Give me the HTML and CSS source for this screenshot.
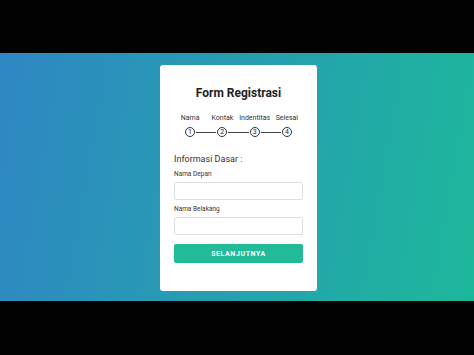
FILE: index.html
```html
<!DOCTYPE html>
<html lang="id">
<head>
<meta charset="utf-8">
<title>Form Registrasi</title>
<link rel="stylesheet" href="styles.css">
</head>
<body>
<div class="screen">
  <div class="bar"></div>
  <div class="stage">
    <form class="card">
      <h1 class="title">Form Registrasi</h1>
      <div class="step-labels">
        <span>Nama</span>
        <span>Kontak</span>
        <span>Indentitas</span>
        <span>Selesai</span>
      </div>
      <div class="step-track">
        <span class="dot">1</span>
        <span class="line"></span>
        <span class="dot">2</span>
        <span class="line"></span>
        <span class="dot">3</span>
        <span class="line"></span>
        <span class="dot">4</span>
      </div>
      <h2 class="section">Informasi Dasar :</h2>
      <label class="field-label">Nama Depan</label>
      <input class="field" type="text">
      <label class="field-label second">Nama Belakang</label>
      <input class="field" type="text">
      <button class="next" type="button">SELANJUTNYA</button>
    </form>
  </div>
  <div class="bar bottom"></div>
</div>
</body>
</html>
```
FILE: styles.css
```css
html, body {
  margin: 0;
  padding: 0;
  background: #000;
}
body {
  font-family: Roboto, "Noto Sans", Arial, sans-serif;
  width: 474px;
  height: 355px;
  overflow: hidden;
}
.screen {
  display: flex;
  flex-direction: column;
  height: 355px;
}
.bar {
  height: 53px;
  background: #020202;
}
.bar.bottom {
  flex: 1;
}
.stage {
  height: 248px;
  padding-top: 12px;
  box-sizing: border-box;
  background: linear-gradient(100deg, #2f87c3 0%, #259fb0 50%, #1db89b 100%);
}
.card {
  width: 157px;
  height: 226px;
  margin: 0 0 0 160px;
  padding: 0 14px;
  box-sizing: border-box;
  background: #fff;
  border-radius: 3px;
  display: flex;
  flex-direction: column;
}
.title {
  margin: 21px 0 0;
  font-size: 12px;
  line-height: 14px;
  font-weight: 700;
  color: #222;
  text-align: center;
}
.step-labels {
  margin-top: 14px;
  display: grid;
  grid-template-columns: repeat(4, 1fr);
  font-size: 7px;
  line-height: 9px;
  color: #333;
  text-align: center;
  white-space: nowrap;
}
.step-track {
  margin-top: 4px;
  display: flex;
  align-items: center;
  padding: 0 11px;
}
.dot {
  width: 10px;
  height: 10px;
  box-sizing: border-box;
  border: 1px solid #333;
  border-radius: 50%;
  font-size: 7px;
  line-height: 8px;
  text-align: center;
  color: #222;
  flex: none;
}
.line {
  flex: 1;
  height: 1px;
  background: #444;
  margin: 0 1px;
}
.section {
  margin: 17px 0 0;
  font-size: 9px;
  line-height: 11px;
  font-weight: 400;
  color: #333;
}
.field-label {
  margin-top: 5px;
  font-size: 6.5px;
  line-height: 8px;
  color: #333;
}
.field-label.second {
  margin-top: 5px;
}
.field {
  margin: 4px 0 0;
  height: 18px;
  box-sizing: border-box;
  border: 1px solid #e0e0e0;
  border-radius: 2px;
  background: #fff;
  padding: 0 4px;
  width: 100%;
}
.next {
  margin-top: 9px;
  height: 19px;
  width: 100%;
  border: none;
  border-radius: 2px;
  background: #21bb98;
  color: #fff;
  font-family: Roboto, "Noto Sans", Arial, sans-serif;
  font-size: 7px;
  font-weight: 700;
  letter-spacing: 0.6px;
  padding: 0;
}
```
